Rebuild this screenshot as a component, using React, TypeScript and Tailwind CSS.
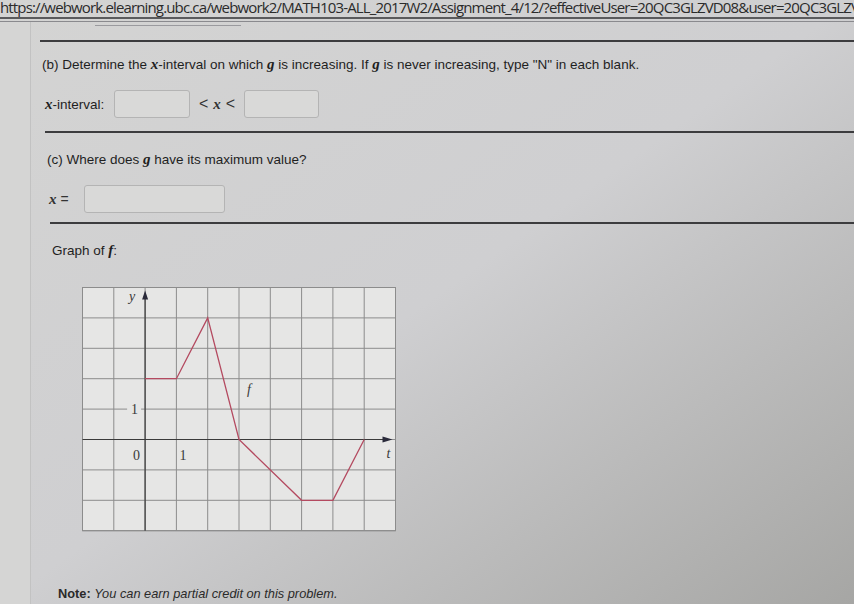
const URL_TEXT =
  'https://webwork.elearning.ubc.ca/webwork2/MATH103-ALL_2017W2/Assignment_4/12/?effectiveUser=20QC3GLZVD08&user=20QC3GLZV';

const CW = 31.3;
const RH = 30.4;
const X = (t: number) => (t + 2) * CW;
const Y = (v: number) => (5 - v) * RH;

const F_POINTS: [number, number][] = [
  [0, 2],
  [1, 2],
  [2, 4],
  [3, 0],
  [5, -2],
  [6, -2],
  [7, 0],
];

function MathVar({ children }: { children: React.ReactNode }) {
  return (
    <span className="font-['Liberation_Serif','DejaVu_Serif',serif] text-[15px] font-semibold italic">
      {children}
    </span>
  );
}

function Blank({ w }: { w: string }) {
  return <div className={`${w} h-[28px] rounded-[3px] border border-[#b4b4b4] bg-[#d9d9d8]`} />;
}

function GraphOfF() {
  const cols = Array.from({ length: 11 }, (_, i) => i * CW);
  const rows = Array.from({ length: 9 }, (_, i) => i * RH);
  const pts = F_POINTS.map(([t, v]) => `${X(t)},${Y(v)}`).join(' ');
  return (
    <svg width="314" height="246" viewBox="-0.5 -0.5 314 246" className="block">
      <rect x="0" y="0" width={10 * CW} height={8 * RH} fill="#e6e6e5" stroke="#8c8c8c" />
      {cols.map(x => (
        <line key={'c' + x} x1={x} y1={0} x2={x} y2={8 * RH} stroke="#8c8c8c" strokeWidth="1" />
      ))}
      {rows.map(y => (
        <line key={'r' + y} x1={0} y1={y} x2={10 * CW} y2={y} stroke="#8c8c8c" strokeWidth="1" />
      ))}
      {/* axes */}
      <line x1={X(0)} y1={8 * RH} x2={X(0)} y2={8} stroke="#3a3a3a" strokeWidth="1.2" />
      <polygon points={`${X(0) - 3},${12} ${X(0)},${3} ${X(0) + 3},${12}`} fill="#2a2a3a" />
      <line x1={0} y1={Y(0)} x2={304} y2={Y(0)} stroke="#3a3a3a" strokeWidth="1.2" />
      <polygon points={`${300},${Y(0) - 3} ${310},${Y(0)} ${300},${Y(0) + 3}`} fill="#2a2a3a" />
      {/* labels */}
      <rect x={X(0) - 18} y={Y(1) - 6} width="14" height="12" fill="#e6e6e5" />
      <rect x={X(0) - 14} y={Y(0) + 8} width="11" height="15" fill="#e6e6e5" />
      <g fontFamily="'Liberation Serif', 'DejaVu Serif', serif" fontSize="14" fill="#3a3a3a">
        <text x={X(0) - 16} y={13} fontStyle="italic">y</text>
        <text x={X(0) - 14} y={Y(1) + 5}>1</text>
        <text x={X(0) - 12} y={Y(0) + 20}>0</text>
        <text x={X(1) + 3} y={Y(0) + 20}>1</text>
        <text x={X(3) + 8} y={Y(1.5)} fontStyle="italic">f</text>
        <text x={304} y={Y(0) + 18} fontStyle="italic">t</text>
      </g>
      <polyline points={pts} fill="none" stroke="#b44a60" strokeWidth="1.3" />
    </svg>
  );
}

export default function App() {
  return (
    <div className="relative h-[604px] w-[854px] overflow-hidden bg-linear-to-br from-[#d4d4d3] via-[#cfcfd1] to-[#a6a6a4] font-['Liberation_Sans',Arial,sans-serif] text-[#1f1f1f]">
      {/* browser address bar */}
      <div className="h-[17px] overflow-hidden whitespace-nowrap">
        <div className="-mt-[3px] font-['Open_Sans',sans-serif] text-[15px] leading-[20px] tracking-[-0.85px] text-[#2b2b2b]">
          {URL_TEXT}
        </div>
      </div>
      <div className="h-[2px] bg-[#5a5a5c]" />
      <div className="mt-[2px] h-px bg-[#8a8a8e]" />

      <div className="flex">
        {/* left gutter */}
        <div className="h-[584px] w-[31px] shrink-0 border-r border-[#c2c2c2] bg-[#d5d5d4]" />

        <div className="flex-1">
          <div className="ml-[64px] mt-[3px] h-px w-[146px] bg-[#9a9a9e]" />
          <div className="ml-[9px] mt-[14px] h-[2px] bg-[#3c3c3e]" />

          {/* (b) */}
          <p className="ml-[11px] mt-[14px] text-[13.5px] leading-[16px]">
            (b) Determine the <MathVar>x</MathVar>-interval on which <MathVar>g</MathVar> is increasing. If{' '}
            <MathVar>g</MathVar> is never increasing, type "N" in each blank.
          </p>
          <div className="ml-[14px] mt-[17px] flex items-center">
            <span className="w-[69px] text-[13.5px]">
              <MathVar>x</MathVar>-interval:
            </span>
            <Blank w="w-[76px]" />
            <span className="mx-[9px] flex items-center gap-[5px] text-[16px] text-[#333]">
              <span>&lt;</span>
              <MathVar>x</MathVar>
              <span>&lt;</span>
            </span>
            <Blank w="w-[75px]" />
          </div>
          <div className="ml-[14px] mt-[13px] h-[2px] bg-[#3c3c3e]" />

          {/* (c) */}
          <p className="ml-[16px] mt-[18px] text-[13.5px] leading-[16px]">
            (c) Where does <MathVar>g</MathVar> have its maximum value?
          </p>
          <div className="ml-[18px] mt-[17px] flex items-center">
            <span className="w-[35px] text-[14px] text-[#333]">
              <MathVar>x</MathVar> =
            </span>
            <Blank w="w-[141px]" />
          </div>
          <div className="ml-[19px] mt-[9px] h-[2px] bg-[#3c3c3e]" />

          {/* graph */}
          <p className="ml-[21px] mt-[18px] text-[13.5px] leading-[16px]">
            Graph of <MathVar>f</MathVar>:
          </p>
          <div className="ml-[51px] mt-[28px]">
            <GraphOfF />
          </div>

          <p className="ml-[27px] mt-[54px] text-[12.8px] leading-[14px] text-[#2a2a2a]">
            <span className="font-bold">Note:</span>{' '}
            <span className="italic">You can earn partial credit on this problem.</span>
          </p>
        </div>
      </div>
    </div>
  );
}
